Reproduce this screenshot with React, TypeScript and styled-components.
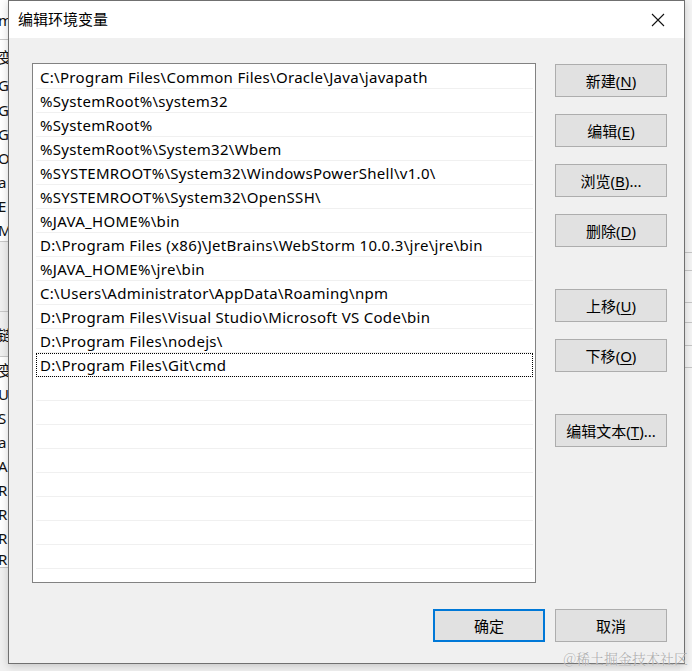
import React from "react";
import styled, { createGlobalStyle } from "styled-components";

const GlobalStyle = createGlobalStyle`
  html, body {
    margin: 0;
    padding: 0;
    background: #f0f0f0;
  }
  body {
    font-family: "Noto Sans", "Noto Sans CJK SC", sans-serif;
  }
`;

const paths = [
  "C:\\Program Files\\Common Files\\Oracle\\Java\\javapath",
  "%SystemRoot%\\system32",
  "%SystemRoot%",
  "%SystemRoot%\\System32\\Wbem",
  "%SYSTEMROOT%\\System32\\WindowsPowerShell\\v1.0\\",
  "%SYSTEMROOT%\\System32\\OpenSSH\\",
  "%JAVA_HOME%\\bin",
  "D:\\Program Files (x86)\\JetBrains\\WebStorm 10.0.3\\jre\\jre\\bin",
  "%JAVA_HOME%\\jre\\bin",
  "C:\\Users\\Administrator\\AppData\\Roaming\\npm",
  "D:\\Program Files\\Visual Studio\\Microsoft VS Code\\bin",
  "D:\\Program Files\\nodejs\\",
  "D:\\Program Files\\Git\\cmd",
];

// fragments of the window behind the dialog (left edge)
const backRows: { text: string; h: number; gray?: boolean; line?: boolean }[] = [
  { text: "m", h: 40, line: true },
  { text: "变", h: 32 },
  { text: "G", h: 25 },
  { text: "G", h: 25 },
  { text: "G", h: 24 },
  { text: "Or", h: 24 },
  { text: "a", h: 24 },
  { text: "E", h: 24 },
  { text: "M", h: 24, line: true },
  { text: "", h: 70, gray: true, line: true },
  { text: "链", h: 45, gray: true, line: true },
  { text: "变", h: 25 },
  { text: "U", h: 24 },
  { text: "S", h: 24 },
  { text: "a", h: 24 },
  { text: "A", h: 24 },
  { text: "R", h: 24 },
  { text: "R", h: 24 },
  { text: "R", h: 24 },
  { text: "R", h: 18, line: true },
];

const sideButtons: { label: string; key: string; dots?: boolean; gap: number }[] = [
  { label: "新建", key: "N", gap: 0 },
  { label: "编辑", key: "E", gap: 17 },
  { label: "浏览", key: "B", dots: true, gap: 17 },
  { label: "删除", key: "D", gap: 17 },
  { label: "上移", key: "U", gap: 42 },
  { label: "下移", key: "O", gap: 17 },
  { label: "编辑文本", key: "T", dots: true, gap: 42 },
];

const App = () => {
  const emptyRows = Array.from({ length: 10 });
  return (
    <>
      <GlobalStyle />
      <S.Desktop>
        <S.BackWindow>
          {backRows.map((r, i) => (
            <S.BackRow key={i} $h={r.h} $gray={r.gray} $line={r.line}>
              {r.text}
            </S.BackRow>
          ))}
        </S.BackWindow>
        <S.RightEdge>
          <S.EdgeLine $top={252} />
          <S.EdgeLine $top={270} />
          <S.EdgeLine $top={302} />
          <S.EdgeLine $top={322} />
          <S.EdgeLine $top={345} />
          <S.EdgeLine $top={367} />
        </S.RightEdge>

        <S.Dialog>
          <S.TitleBar>
            <S.Title>编辑环境变量</S.Title>
            <S.Close>
              <svg width="14" height="14" viewBox="0 0 14 14">
                <path d="M1 1 L13 13 M13 1 L1 13" stroke="#111" strokeWidth="1.1" fill="none" />
              </svg>
            </S.Close>
          </S.TitleBar>
          <S.Body>
            <S.Main>
              <S.List>
                {paths.map((p, i) => (
                  <S.Row key={p} $focus={i === paths.length - 1}>
                    {p}
                  </S.Row>
                ))}
                {emptyRows.map((_, i) => (
                  <S.Row key={"e" + i} />
                ))}
              </S.List>
              <S.Side>
                {sideButtons.map((b) => (
                  <S.Button key={b.key} $gap={b.gap}>
                    {b.label}(<u>{b.key}</u>){b.dots ? "..." : ""}
                  </S.Button>
                ))}
              </S.Side>
            </S.Main>
            <S.Footer>
              <S.Button $primary>确定</S.Button>
              <S.Button>取消</S.Button>
            </S.Footer>
          </S.Body>
        </S.Dialog>
        <S.Watermark>@稀土掘金技术社区</S.Watermark>
      </S.Desktop>
    </>
  );
};

export default App;

const S = {
  Desktop: styled.div`
    position: relative;
    width: 692px;
    height: 671px;
    overflow: hidden;
    background: #f0f0f0;
  `,
  BackWindow: styled.div`
    position: absolute;
    left: 0;
    top: 0;
    width: 40px;
    display: flex;
    flex-direction: column;
    background: #fff;
  `,
  BackRow: styled.div<{ $h: number; $gray?: boolean; $line?: boolean }>`
    height: ${(p) => p.$h}px;
    display: flex;
    align-items: center;
    margin-left: -2px;
    box-sizing: border-box;
    background: ${(p) => (p.$gray ? "#f0f0f0" : "#fff")};
    border-bottom: ${(p) => (p.$line ? "1px solid #c8c8c8" : "none")};
    font-size: 15px;
    color: #111;
  `,
  RightEdge: styled.div`
    position: absolute;
    right: 0;
    top: 0;
    width: 12px;
    height: 671px;
    background: #f4f4f4;
  `,
  EdgeLine: styled.div<{ $top: number }>`
    position: absolute;
    left: 0;
    right: 0;
    top: ${(p) => p.$top}px;
    height: 1px;
    background: #c6c6c6;
  `,
  Dialog: styled.div`
    position: absolute;
    left: 8px;
    top: 0;
    width: 677px;
    height: 664px;
    box-sizing: border-box;
    border: 1px solid #707070;
    background: #f0f0f0;
    display: flex;
    flex-direction: column;
    box-shadow: 0 2px 8px rgba(0, 0, 0, 0.18);
  `,
  TitleBar: styled.div`
    height: 37px;
    background: #fff;
    display: flex;
    align-items: center;
    justify-content: space-between;
    padding-left: 9px;
    flex-shrink: 0;
  `,
  Title: styled.div`
    font-size: 15px;
    color: #000;
    padding-bottom: 2px;
  `,
  Close: styled.div`
    width: 46px;
    height: 37px;
    display: flex;
    align-items: center;
    justify-content: center;
    margin-right: 3px;
  `,
  Body: styled.div`
    flex: 1;
    display: flex;
    flex-direction: column;
    padding: 25px 17px 20px 23px;
  `,
  Main: styled.div`
    display: flex;
    gap: 19px;
    align-items: flex-start;
  `,
  List: styled.div`
    width: 504px;
    height: 520px;
    box-sizing: border-box;
    border: 1px solid #828282;
    background: #fff;
    padding: 1px 2px 0 3px;
    overflow: hidden;
    display: flex;
    flex-direction: column;
  `,
  Row: styled.div<{ $focus?: boolean }>`
    flex-shrink: 0;
    height: 24px;
    box-sizing: border-box;
    padding-left: 4px;
    display: flex;
    align-items: center;
    font-size: 15px;
    letter-spacing: 0.3px;
    color: #000;
    white-space: nowrap;
    border-bottom: 1px solid #f0f0f0;
    outline: ${(p) => (p.$focus ? "1px dotted #000" : "none")};
    outline-offset: -1px;
  `,
  Side: styled.div`
    display: flex;
    flex-direction: column;
    padding-top: 1px;
  `,
  Button: styled.div<{ $gap?: number; $primary?: boolean }>`
    width: 112px;
    height: 33px;
    margin-top: ${(p) => p.$gap ?? 0}px;
    box-sizing: border-box;
    border: ${(p) => (p.$primary ? "2px solid #0078d7" : "1px solid #adadad")};
    background: #e1e1e1;
    display: flex;
    align-items: center;
    justify-content: center;
    font-size: 15px;
    color: #000;
    white-space: nowrap;
    u {
      text-decoration: underline;
      text-underline-offset: 2px;
    }
  `,
  Footer: styled.div`
    display: flex;
    justify-content: flex-end;
    gap: 10px;
    margin-top: 26px;
  `,
  Watermark: styled.div`
    position: absolute;
    right: 4px;
    bottom: 4px;
    line-height: 18px;
    font-family: "Noto Serif CJK SC", "Noto Sans CJK SC", serif;
    font-size: 14px;
    color: rgba(150, 150, 150, 0.75);
    text-shadow: 0 0 1px #fff;
  `,
};
